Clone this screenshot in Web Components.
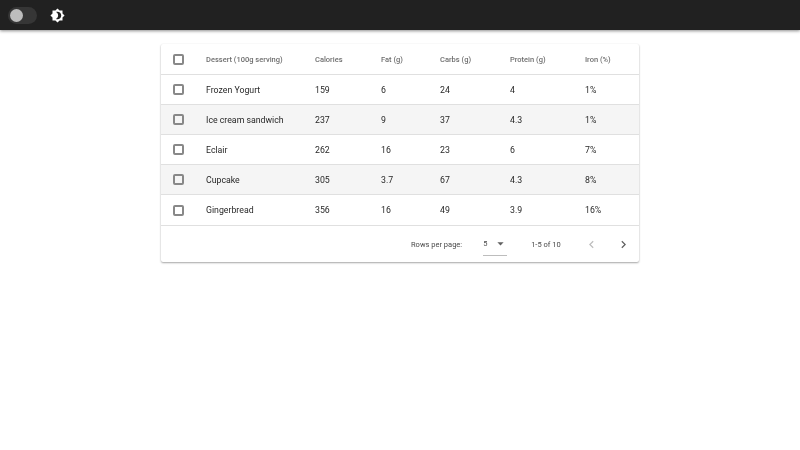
<!DOCTYPE html>
<html>
<head>
<meta charset="utf-8">
<title>Desserts</title>
<style>
  html, body { margin: 0; height: 100%; background: #fff; font-family: Roboto, "Liberation Sans", sans-serif; }
</style>
</head>
<body>
<app-bar></app-bar>
<page-body>
  <data-card>
    <table-row head><check-box></check-box><span>Dessert (100g serving)</span><span>Calories</span><span>Fat (g)</span><span>Carbs (g)</span><span>Protein (g)</span><span>Iron (%)</span></table-row>
    <table-row><check-box></check-box><span>Frozen Yogurt</span><span>159</span><span>6</span><span>24</span><span>4</span><span>1%</span></table-row>
    <table-row shaded><check-box></check-box><span>Ice cream sandwich</span><span>237</span><span>9</span><span>37</span><span>4.3</span><span>1%</span></table-row>
    <table-row><check-box></check-box><span>Eclair</span><span>262</span><span>16</span><span>23</span><span>6</span><span>7%</span></table-row>
    <table-row shaded><check-box></check-box><span>Cupcake</span><span>305</span><span>3.7</span><span>67</span><span>4.3</span><span>8%</span></table-row>
    <table-row tall><check-box></check-box><span>Gingerbread</span><span>356</span><span>16</span><span>49</span><span>3.9</span><span>16%</span></table-row>
    <table-footer></table-footer>
  </data-card>
</page-body>

<script>
//top bar with the switch and the brightness icon
class AppBar extends HTMLElement {
  constructor() {
    super();
    this.attachShadow({ mode: "open" });
    this.shadowRoot.innerHTML = `
      <style>
        :host { display: flex; align-items: center; height: 30px; background: #212121; box-shadow: 0 1px 3px rgba(0,0,0,.45); padding-left: 8px; gap: 13px; box-sizing: border-box; }
        .track { width: 29px; height: 17px; border-radius: 9px; background: #363636; display: flex; align-items: center; padding-left: 2px; box-sizing: border-box; }
        .thumb { width: 13px; height: 13px; border-radius: 50%; background: #bdbdbd; }
        svg { width: 15px; height: 15px; display: block; }
      </style>
      <div class="track"><div class="thumb"></div></div>
      <svg viewBox="0 0 24 24"><path fill="#fff" d="M20 8.69V4h-4.69L12 .69 8.69 4H4v4.69L.69 12 4 15.31V20h4.69L12 23.31 15.31 20H20v-4.69L23.31 12 20 8.69zM12 18c-.89 0-1.74-.2-2.5-.55C11.56 16.5 13 14.42 13 12s-1.44-4.5-3.5-5.45C10.26 6.2 11.11 6 12 6c3.31 0 6 2.69 6 6s-2.69 6-6 6z"/></svg>
    `;
  }
}

class PageBody extends HTMLElement {
  constructor() {
    super();
    this.attachShadow({ mode: "open" });
    this.shadowRoot.innerHTML = `
      <style>
        :host { display: flex; justify-content: center; padding-top: 14px; }
      </style>
      <slot></slot>
    `;
  }
}

class DataCard extends HTMLElement {
  constructor() {
    super();
    this.attachShadow({ mode: "open" });
    this.shadowRoot.innerHTML = `
      <style>
        :host { display: block; width: 478px; background: #fff; border-radius: 2px; box-shadow: 0 1px 2px rgba(0,0,0,.35), 0 0 2px rgba(0,0,0,.06); will-change: transform; }
      </style>
      <slot></slot>
    `;
  }
}

//one row of the table, "head" makes it the small bold header
class TableRow extends HTMLElement {
  constructor() {
    super();
    this.attachShadow({ mode: "open" });
    this.shadowRoot.innerHTML = `
      <style>
        :host { display: grid; grid-template-columns: 45px 109px 66px 59px 70px 75px 54px; align-items: center; height: 30px; box-sizing: border-box; border-bottom: 1px solid #e0e0e0; font-size: 8.75px; color: rgba(0,0,0,.87); white-space: nowrap; }
        :host([head]) { height: 31px; font-size: 7.5px; font-weight: 500; color: rgba(0,0,0,.6); }
        :host([shaded]) { background: #f5f5f5; }
        :host([tall]) { height: 31px; }
        ::slotted(check-box) { margin-left: 12px; }
      </style>
      <slot></slot>
    `;
  }
}

class CheckBox extends HTMLElement {
  constructor() {
    super();
    this.attachShadow({ mode: "open" });
    this.shadowRoot.innerHTML = `
      <style>
        :host { display: block; width: 7px; height: 7px; border: 2px solid #888; border-radius: 2px; box-sizing: content-box; }
      </style>
    `;
  }
}

class TableFooter extends HTMLElement {
  constructor() {
    super();
    this.attachShadow({ mode: "open" });
    this.shadowRoot.innerHTML = `
      <style>
        :host { display: flex; align-items: center; height: 36px; font-size: 7.5px; color: rgba(0,0,0,.75); padding-left: 250px; box-sizing: border-box; white-space: nowrap; }
        .select { display: flex; align-items: center; justify-content: space-between; width: 24px; height: 23px; margin-left: 21px; border-bottom: 1px solid #bdbdbd; box-sizing: border-box; }
        .select svg { margin-right: -1px; }
        .range { margin-left: 24px; }
        .arrow { display: block; width: 15px; height: 15px; }
        .prev { margin-left: 23.5px; }
        .next { margin-left: 17px; }
      </style>
      <span>Rows per page:</span>
      <div class="select">
        <span>5</span>
        <svg width="15" height="15" viewBox="0 0 24 24"><path fill="#616161" d="M7 10l5 5 5-5z"/></svg>
      </div>
      <span class="range">1-5 of 10</span>
      <svg class="arrow prev" viewBox="0 0 24 24"><path fill="#bdbdbd" d="M15.41 7.41 14 6l-6 6 6 6 1.41-1.41L10.83 12z"/></svg>
      <svg class="arrow next" viewBox="0 0 24 24"><path fill="#616161" d="M10 6 8.59 7.41 13.17 12l-4.58 4.59L10 18l6-6z"/></svg>
    `;
  }
}

customElements.define("app-bar", AppBar);
customElements.define("page-body", PageBody);
customElements.define("data-card", DataCard);
customElements.define("table-row", TableRow);
customElements.define("check-box", CheckBox);
customElements.define("table-footer", TableFooter);
</script>
</body>
</html>
